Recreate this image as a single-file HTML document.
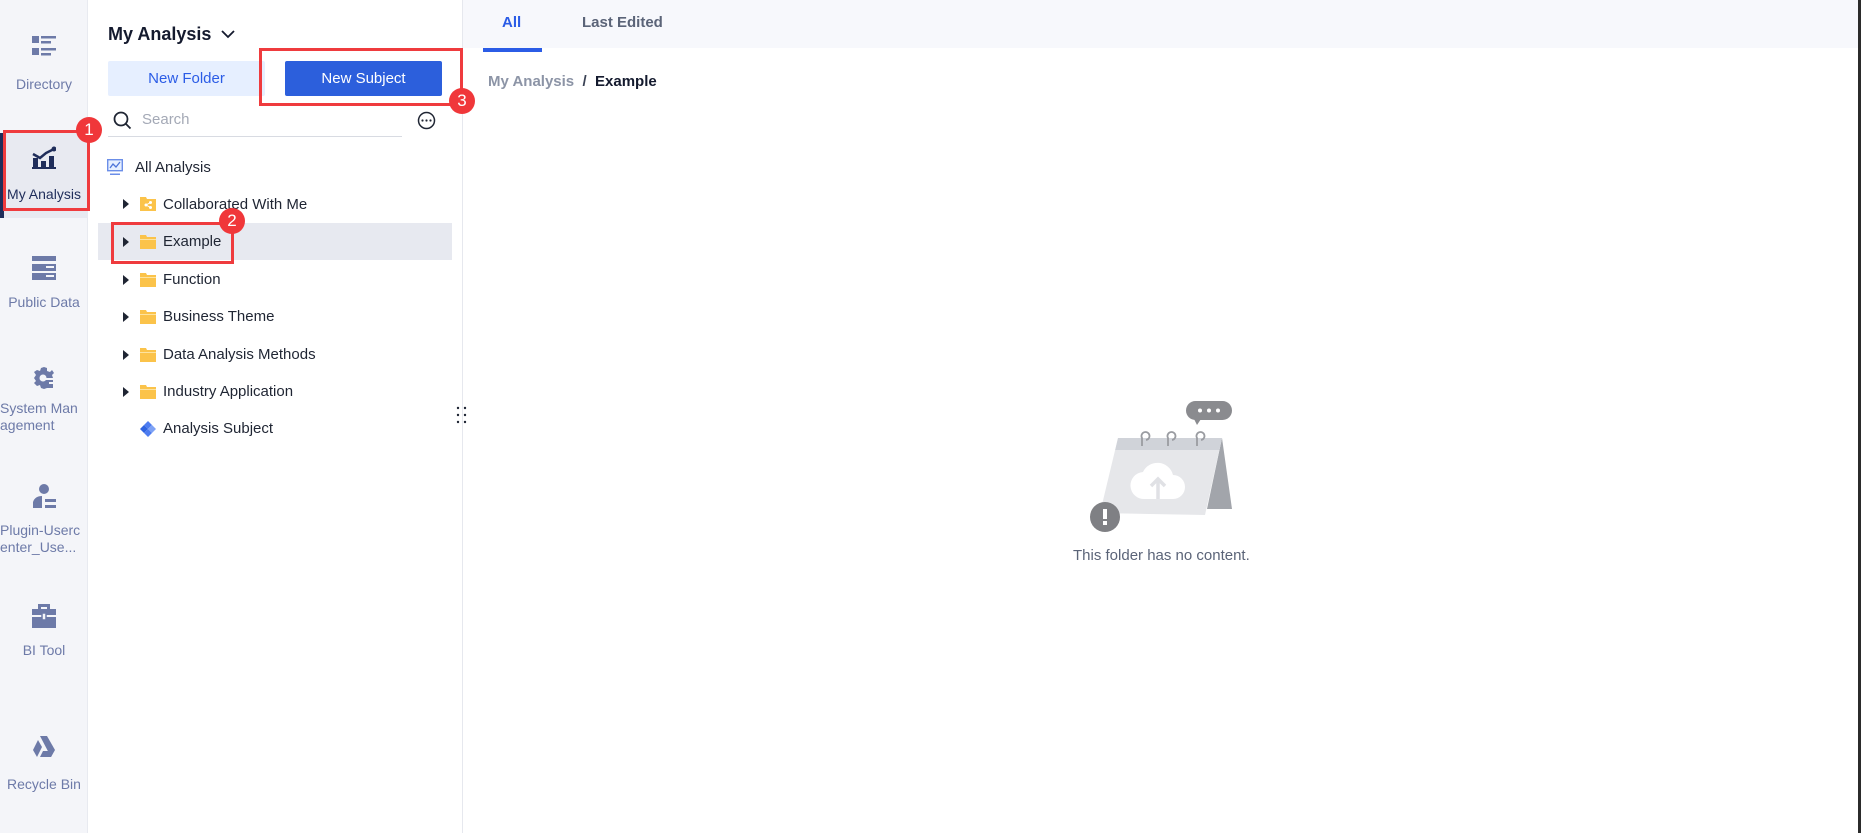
<!DOCTYPE html>
<html><head><meta charset="utf-8"><style>
*{margin:0;padding:0;box-sizing:border-box}
body{width:1861px;height:833px;overflow:hidden;background:#fff;font-family:"Liberation Sans",Arial,sans-serif;position:relative}
.abs{position:absolute}
.side{left:0;top:0;width:88px;height:833px;background:#f4f5f9;border-right:1px solid #e8eaf0}
.si{position:absolute;left:0;width:88px;text-align:center;color:#6d7aa8;font-size:14px;line-height:17px}
.si svg{display:block;margin:0 auto}
.badge{position:absolute;width:26px;height:26px;border-radius:13px;background:#f0373a;color:#fff;font-size:17px;text-align:center;line-height:26px}
.red{position:absolute;border:3px solid #ef3b3e}
.row{position:absolute;left:98px;width:354px;height:37px;font-size:15px;color:#1f2533}
.row .t{position:absolute;top:10px}
.tri{position:absolute;left:123px;width:0;height:0;border-left:6px solid #1f2533;border-top:5px solid transparent;border-bottom:5px solid transparent}
</style></head><body>
<div class="abs side"></div>
<div class="abs" style="left:0;top:133px;width:88px;height:85px;background:#e8eaf1"></div>
<div class="abs" style="left:0;top:133px;width:4px;height:85px;background:#1f2d5a"></div>

<div class="si" style="top:36px">
<svg width="24" height="22" viewBox="0 0 24 22"><rect x="0" y="0" width="7" height="7" fill="#6d7aa8"/><rect x="9" y="0" width="15" height="2.5" fill="#6d7aa8"/><rect x="9" y="5" width="10" height="2.5" fill="#6d7aa8"/><rect x="0" y="12" width="7" height="7" fill="#6d7aa8"/><rect x="9" y="12" width="15" height="2.5" fill="#6d7aa8"/><rect x="9" y="17" width="10" height="2.5" fill="#6d7aa8"/></svg>
<div style="margin-top:18px">Directory</div></div>

<div class="si" style="top:146px;color:#1f2d5a">
<svg width="24" height="24" viewBox="0 0 24 24"><path d="M1 8 L8 12 L14 7 L22 3" stroke="#1f2d5a" stroke-width="2.5" fill="none"/><circle cx="22" cy="3" r="2.5" fill="#1f2d5a"/><rect x="1" y="12" width="5" height="9" fill="#1f2d5a"/><rect x="9" y="15" width="5" height="6" fill="#1f2d5a"/><rect x="17" y="10" width="5" height="11" fill="#1f2d5a"/><rect x="0" y="21" width="24" height="2" fill="#1f2d5a"/></svg>
<div style="margin-top:16px">My Analysis</div></div>

<div class="si" style="top:256px">
<svg width="24" height="24" viewBox="0 0 24 24"><rect x="0" y="0" width="24" height="5" fill="#6d7aa8"/><rect x="0" y="8" width="24" height="7" fill="#6d7aa8"/><rect x="0" y="17" width="24" height="7" fill="#6d7aa8"/><rect x="14" y="19" width="8" height="2" fill="#f4f5f9"/><rect x="14" y="10" width="8" height="2" fill="#f4f5f9"/></svg>
<div style="margin-top:14px">Public Data</div></div>

<div class="si" style="top:366px;text-align:left">
<svg width="24" height="24" viewBox="0 0 24 24"><path d="M12 1 L15 2 L15 5 L18 6 L20 4 L22 7 L20 9 L21 12 L11 12 L11 14 L21 14 L21 16 L17 16 L17 18 L21 18 L21 22 L15 22 L12 23 L9 22 L8 19 L5 20 L2 17 L4 15 L2 12 L4 9 L2 6 L5 4 L8 5 L9 2 Z" fill="#6d7aa8"/><circle cx="11" cy="12" r="3.5" fill="#f4f5f9"/></svg>
<div style="margin-top:10px">System Man<br>agement</div></div>

<div class="si" style="top:484px;text-align:left">
<svg width="24" height="24" viewBox="0 0 24 24"><circle cx="12" cy="5" r="5" fill="#6d7aa8"/><path d="M1 24 L1 18 Q3 12 10 12 L10 24Z" fill="#6d7aa8"/><rect x="13" y="15" width="11" height="3" fill="#6d7aa8"/><rect x="13" y="21" width="11" height="3" fill="#6d7aa8"/></svg>
<div style="margin-top:14px">Plugin-Userc<br>enter_Use...</div></div>

<div class="si" style="top:604px">
<svg width="24" height="24" viewBox="0 0 24 24"><path d="M6 0 H18 V5 H24 V24 H0 V5 H6Z M9 3 V5 H15 V3Z" fill="#6d7aa8" fill-rule="evenodd"/><rect x="0" y="11" width="24" height="2" fill="#f4f5f9"/><rect x="10" y="9" width="4" height="7" fill="#f4f5f9" stroke="#6d7aa8" stroke-width="1.5"/></svg>
<div style="margin-top:14px">BI Tool</div></div>

<div class="si" style="top:736px">
<svg width="24" height="22" viewBox="0 0 24 22"><path d="M8 0 H15 L23 14 L19 21 Z" fill="#6d7aa8"/><path d="M6 4 L10 11 L5 21 L1 14Z" fill="#6d7aa8"/><path d="M11 15 H22 L19 21 H8Z" fill="#6d7aa8"/></svg>
<div style="margin-top:18px">Recycle Bin</div></div>

<div class="red" style="left:3px;top:130px;width:87px;height:81px"></div>
<div class="badge" style="left:76px;top:117px">1</div>

<!-- panel -->
<div class="abs" style="left:462px;top:0;width:1px;height:833px;background:#e6e8ee"></div>
<div class="abs" style="left:108px;top:24px;font-size:18px;font-weight:bold;color:#141a2e">My Analysis</div>
<svg class="abs" style="left:221px;top:30px" width="14" height="9" viewBox="0 0 14 9"><path d="M1 1 L7 7 L13 1" stroke="#141a2e" stroke-width="1.8" fill="none"/></svg>
<div class="abs" style="left:108px;top:61px;width:157px;height:35px;background:#e6efff;border-radius:2px;color:#2b5ce6;font-size:15px;text-align:center;line-height:35px">New Folder</div>
<div class="abs" style="left:285px;top:61px;width:157px;height:35px;background:#2c5fdc;border-radius:2px;color:#fff;font-size:15px;text-align:center;line-height:35px">New Subject</div>
<div class="red" style="left:259px;top:48px;width:204px;height:58px"></div>
<div class="badge" style="left:449px;top:88px">3</div>

<svg class="abs" style="left:113px;top:111px" width="19" height="19" viewBox="0 0 19 19"><circle cx="8" cy="8" r="6.5" stroke="#1f2533" stroke-width="1.8" fill="none"/><path d="M13 13 L17.5 17.5" stroke="#1f2533" stroke-width="1.8"/></svg>
<div class="abs" style="left:142px;top:111px;font-size:15px;color:#a4a9b6">Search</div>
<div class="abs" style="left:108px;top:136px;width:294px;height:1px;background:#d8dbe2"></div>
<svg class="abs" style="left:417px;top:111px" width="19" height="19" viewBox="0 0 19 19"><circle cx="9.5" cy="9.5" r="8" stroke="#1f2533" stroke-width="1.5" fill="none"/><circle cx="5.5" cy="9.5" r="1.1" fill="#1f2533"/><circle cx="9.5" cy="9.5" r="1.1" fill="#1f2533"/><circle cx="13.5" cy="9.5" r="1.1" fill="#1f2533"/></svg>

<div class="row" style="top:149px"><svg class="abs" style="left:9px;top:10px" width="16" height="17" viewBox="0 0 16 17"><rect x="0.7" y="0.7" width="14.6" height="11" fill="#e6efff" stroke="#6b8ee8" stroke-width="1.4"/><path d="M3 9 L6 5 L9 8 L13 3" stroke="#4d74d9" stroke-width="1.3" fill="none"/><rect x="3" y="14.5" width="10" height="1.5" fill="#6b8ee8"/></svg><span class="t" style="left:37px">All Analysis</span></div>

<div class="abs" style="left:98px;top:223px;width:354px;height:37px;background:#e7e9f0"></div>
<div class="tri" style="top:199px"></div>
<div class="tri" style="top:237px"></div>
<div class="tri" style="top:275px"></div>
<div class="tri" style="top:312px"></div>
<div class="tri" style="top:350px"></div>
<div class="tri" style="top:387px"></div>

<svg class="abs" style="left:140px;top:196px" width="16" height="16" viewBox="0 0 16 16"><path d="M0 1 H6 L7 3 H16 V15 H0Z" fill="#fbc34a"/><circle cx="6" cy="9" r="1.5" fill="#fff"/><circle cx="10.5" cy="6.5" r="1.5" fill="#fff"/><circle cx="10.5" cy="11.5" r="1.5" fill="#fff"/><path d="M6 9 L10.5 6.5 M6 9 L10.5 11.5" stroke="#fff"/></svg>
<div class="row" style="top:186px;background:none"><span class="t" style="left:65px">Collaborated With Me</span></div>

<div class="row" style="top:223px"><span class="t" style="left:65px">Example</span></div>
<div class="row" style="top:261px"><span class="t" style="left:65px">Function</span></div>
<div class="row" style="top:298px"><span class="t" style="left:65px">Business Theme</span></div>
<div class="row" style="top:336px"><span class="t" style="left:65px">Data Analysis Methods</span></div>
<div class="row" style="top:373px"><span class="t" style="left:65px">Industry Application</span></div>
<svg class="abs" style="left:140px;top:234px" width="16" height="16" viewBox="0 0 16 16"><path d="M0 1 H6 L7 3 H16 V15 H0Z" fill="#fbc34a"/><rect x="0" y="5" width="16" height="1" fill="#fde3a0"/></svg>
<svg class="abs" style="left:140px;top:272px" width="16" height="16" viewBox="0 0 16 16"><path d="M0 1 H6 L7 3 H16 V15 H0Z" fill="#fbc34a"/><rect x="0" y="5" width="16" height="1" fill="#fde3a0"/></svg>
<svg class="abs" style="left:140px;top:309px" width="16" height="16" viewBox="0 0 16 16"><path d="M0 1 H6 L7 3 H16 V15 H0Z" fill="#fbc34a"/><rect x="0" y="5" width="16" height="1" fill="#fde3a0"/></svg>
<svg class="abs" style="left:140px;top:347px" width="16" height="16" viewBox="0 0 16 16"><path d="M0 1 H6 L7 3 H16 V15 H0Z" fill="#fbc34a"/><rect x="0" y="5" width="16" height="1" fill="#fde3a0"/></svg>
<svg class="abs" style="left:140px;top:384px" width="16" height="16" viewBox="0 0 16 16"><path d="M0 1 H6 L7 3 H16 V15 H0Z" fill="#fbc34a"/><rect x="0" y="5" width="16" height="1" fill="#fde3a0"/></svg>

<svg class="abs" style="left:140px;top:421px" width="16" height="16" viewBox="0 0 16 16"><path d="M8 0 L12 4 L8 8 L4 4Z" fill="#4d7cf0"/><path d="M12 4 L16 8 L12 12 L8 8Z" fill="#7ea2f5"/><path d="M4 4 L8 8 L4 12 L0 8Z" fill="#2f63e0"/><path d="M8 8 L12 12 L8 16 L4 12Z" fill="#4d7cf0"/></svg>
<div class="row" style="top:410px"><span class="t" style="left:65px">Analysis Subject</span></div>

<div class="red" style="left:111px;top:222px;width:123px;height:42px"></div>
<div class="badge" style="left:219px;top:208px">2</div>

<svg class="abs" style="left:456px;top:406px" width="12" height="18" viewBox="0 0 12 18"><g fill="#1f2533"><circle cx="2" cy="2" r="1.2"/><circle cx="9" cy="2" r="1.2"/><circle cx="2" cy="9" r="1.2"/><circle cx="9" cy="9" r="1.2"/><circle cx="2" cy="16" r="1.2"/><circle cx="9" cy="16" r="1.2"/></g></svg>

<!-- main -->
<div class="abs" style="left:463px;top:0;width:1396px;height:48px;background:#f7f8fc"></div>
<div class="abs" style="left:502px;top:14px;font-size:15px;font-weight:bold;color:#2b5ce6">All</div>
<div class="abs" style="left:483px;top:48px;width:59px;height:4px;background:#2b5ce6"></div>
<div class="abs" style="left:582px;top:14px;font-size:15px;font-weight:bold;color:#5b6478">Last Edited</div>
<div class="abs" style="left:488px;top:73px;font-size:15px;font-weight:bold;color:#8c94a6">My Analysis &nbsp;<span style="color:#3a4255">/</span>&nbsp; <span style="color:#141a2e">Example</span></div>

<svg class="abs" style="left:1088px;top:400px" width="150" height="135" viewBox="0 0 150 135">
<path d="M134 38 L144 109 L119 109Z" fill="#a2a5ab"/>
<path d="M30 38 L134 38 L117 115 L12 113Z" fill="#e6e7ea"/>
<path d="M30 38 L134 38 L131.4 50 L27.2 50Z" fill="#d0d3d9"/>
<g stroke="#9a9ca1" stroke-width="1.8" fill="none"><path d="M54 46 V38 a4 4 0 1 1 4 2"/><path d="M80 46 V38 a4 4 0 1 1 4 2"/><path d="M109 46 V38 a4 4 0 1 1 4 2"/></g>
<path d="M57 99 h28 a12 12 0 0 0 0-24 a16 16 0 0 0-30-3 a13.5 13.5 0 0 0 2 27Z" fill="#fff"/>
<path d="M70 99 V79 M63 86 L70 79 L77 86" stroke="#e0e1e5" stroke-width="3.5" fill="none"/>
<rect x="98" y="1" width="46" height="19" rx="9.5" fill="#8a8b8f"/>
<path d="M106 19 L109 25 L113 19Z" fill="#8a8b8f"/>
<circle cx="112" cy="10.5" r="2" fill="#fff"/><circle cx="121" cy="10.5" r="2" fill="#fff"/><circle cx="130" cy="10.5" r="2" fill="#fff"/>
<circle cx="17" cy="117" r="15" fill="#7f8084"/>
<rect x="15" y="109" width="4" height="10" fill="#fff"/><rect x="15" y="121" width="4" height="4" fill="#fff"/>
</svg>
<div class="abs" style="left:1073px;top:547px;font-size:15px;color:#5b6478">This folder has no content.</div>

<div class="abs" style="left:1858px;top:0;width:3px;height:833px;background:#2b2b2b"></div>
</body></html>
